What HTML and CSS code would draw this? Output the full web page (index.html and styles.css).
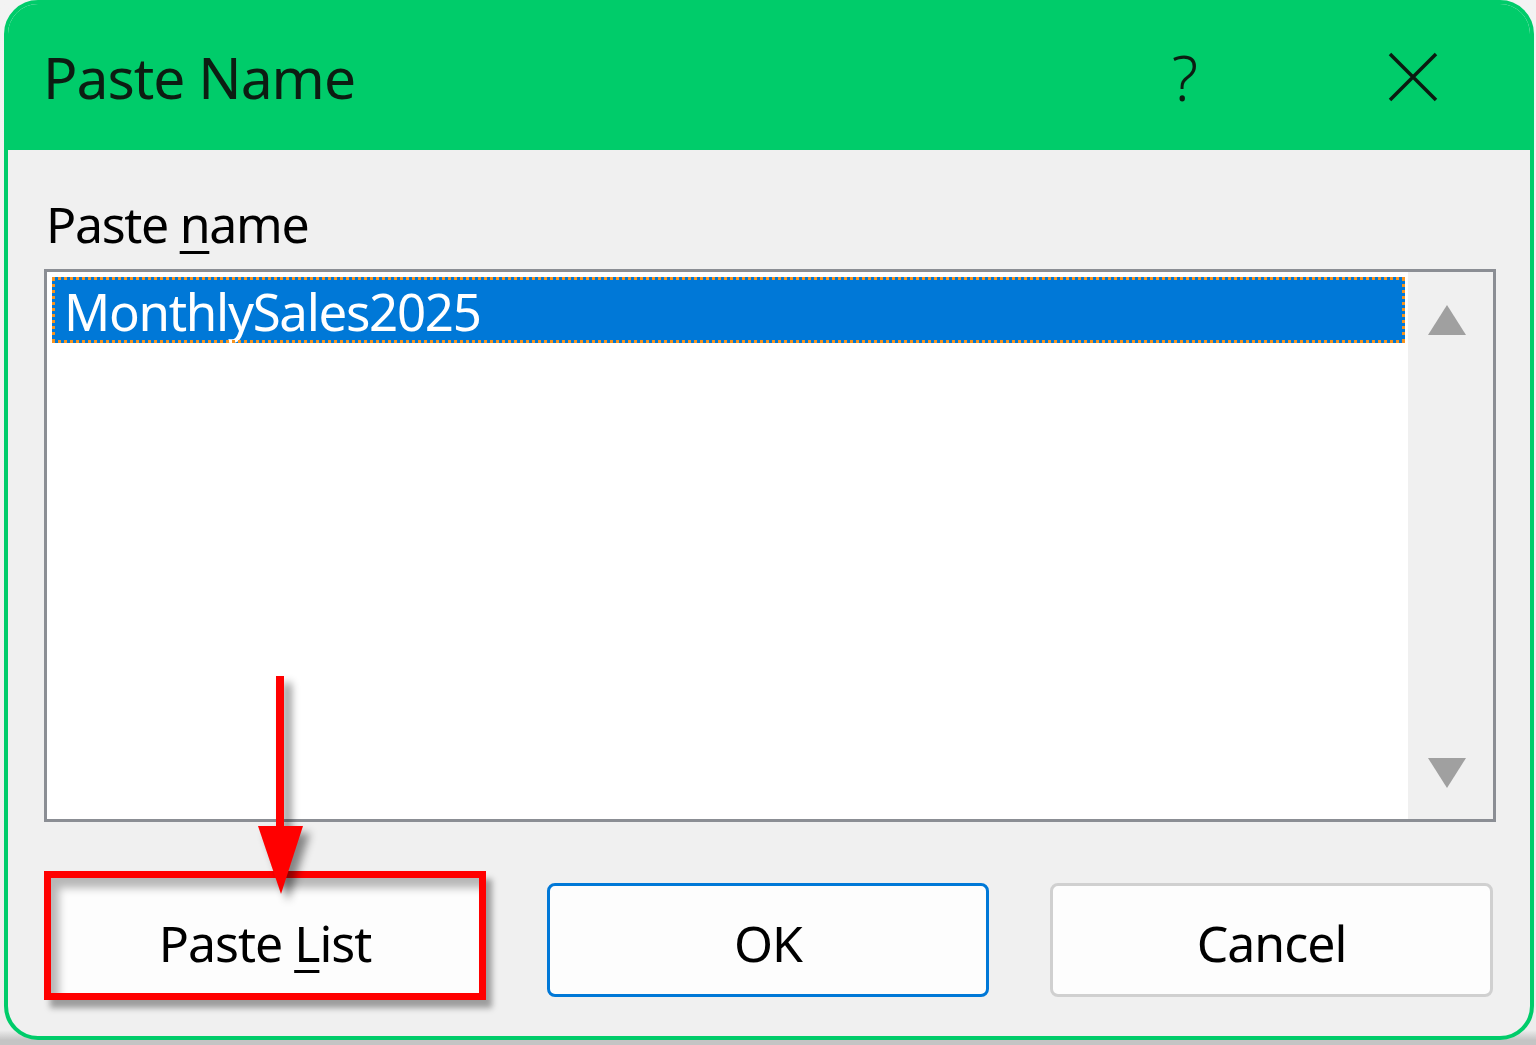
FILE: index.html
```html
<!DOCTYPE html>
<html lang="en">
<head>
<meta charset="utf-8">
<title>Paste Name</title>
<link rel="stylesheet" href="styles.css">
</head>
<body>
<div class="dialog">
  <header class="titlebar">
    <h1 class="title">Paste Name</h1>
    <div class="title-actions">
      <span class="help">?</span>
      <svg class="close" width="50" height="50" viewBox="0 0 50 50" aria-label="Close">
        <path d="M2 2 L48 48 M48 2 L2 48" stroke="#0b1a10" stroke-width="3.5" fill="none"/>
      </svg>
    </div>
  </header>
  <main class="content">
    <label class="field-label">Paste <u>n</u>ame</label>
    <div class="listbox">
      <ul class="items">
        <li class="item selected">MonthlySales2025</li>
      </ul>
      <div class="scrollbar">
        <svg class="scroll-arrow" width="38" height="30" viewBox="0 0 38 30"><polygon points="19,0 38,30 0,30" fill="#a0a0a0"/></svg>
        <svg class="scroll-arrow" width="38" height="30" viewBox="0 0 38 30"><polygon points="0,0 38,0 19,30" fill="#a0a0a0"/></svg>
      </div>
    </div>
    <div class="buttons">
      <div class="highlight">
        <button class="btn btn-inner">Paste <u>L</u>ist</button>
      </div>
      <button class="btn btn-default">OK</button>
      <button class="btn">Cancel</button>
    </div>
  </main>
  <svg class="annotation-arrow" width="80" height="250" viewBox="0 0 80 250">
    <rect x="26" y="16" width="8" height="156" fill="#ff0000"/>
    <polygon points="8,166 53,166 31,234" fill="#ff0000"/>
  </svg>
</div>
</body>
</html>
```

FILE: styles.css
```css
html, body {
  margin: 0;
  padding: 0;
}

body {
  width: 1536px;
  height: 1045px;
  background: linear-gradient(to bottom, #f3f3f3 0, #ededed 1030px, #c4c4c4 1040px, #c4c4c4 100%);
  font-family: "Noto Sans", "Open Sans", sans-serif;
  overflow: hidden;
}

.dialog {
  position: relative;
  box-sizing: border-box;
  width: 1530px;
  height: 1040px;
  margin-left: 4px;
  border: 4px solid #00cc6a;
  border-radius: 34px;
  background: #f0f0f0;
  overflow: hidden;
  display: flex;
  flex-direction: column;
}

.titlebar {
  box-sizing: border-box;
  height: 146px;
  flex: none;
  background: #00cc6a;
  display: flex;
  align-items: flex-start;
  justify-content: space-between;
  padding: 33px 0 0 35px;
}

.title {
  margin: 0;
  font-size: 57px;
  line-height: 80px;
  font-weight: 400;
  color: #0c1d12;
  letter-spacing: -1px;
}

.title-actions {
  display: flex;
  align-items: flex-start;
  gap: 190px;
  padding-right: 92px;
}

.help {
  font-size: 62px;
  line-height: 80px;
  color: #0c1d12;
  font-weight: 300;
}

.close {
  display: block;
  margin-top: 15px;
}

.content {
  flex: 1;
  display: flex;
  flex-direction: column;
  padding: 42px 34px 0 36px;
}

.field-label {
  display: block;
  font-size: 50px;
  line-height: 64px;
  color: #000;
  padding-left: 2px;
  letter-spacing: -1.3px;
}

.field-label u,
.btn u {
  text-decoration-thickness: 3px;
  text-underline-offset: 8px;
}

.listbox {
  box-sizing: border-box;
  margin-top: 13px;
  height: 553px;
  border: 3px solid #8b8e94;
  display: flex;
  background: #ffffff;
}

.items {
  flex: 1;
  list-style: none;
  margin: 0;
  padding: 5px 3px 0 5px;
}

.item {
  box-sizing: border-box;
  height: 66px;
  font-size: 51px;
  line-height: 63px;
  padding: 3px 0 0 12px;
  color: #ffffff;
  letter-spacing: -1.3px;
}

.item.selected {
  background: #0078d7;
  outline: 3px dotted #f7931e;
  outline-offset: -3px;
}

.scrollbar {
  width: 85px;
  flex: none;
  background: #f0f0f0;
  display: flex;
  flex-direction: column;
  justify-content: space-between;
  align-items: center;
  padding: 33px 0 31px;
  box-sizing: border-box;
}

.scroll-arrow {
  display: block;
  margin-left: -7px;
}

.buttons {
  margin-top: 49px;
  display: grid;
  grid-template-columns: 442px 442px 443px;
  column-gap: 61px;
  align-items: start;
}

.btn {
  box-sizing: border-box;
  height: 114px;
  margin-top: 12px;
  border: 3px solid #d0d0d0;
  border-radius: 8px;
  background: #fdfdfd;
  font-family: "Noto Sans", "Open Sans", sans-serif;
  font-size: 50px;
  color: #000;
  padding: 5px 0 0;
  letter-spacing: -1px;
}

.btn-default {
  border-color: #0078d7;
}

.highlight {
  box-sizing: border-box;
  height: 129px;
  border: 7px solid #ff0000;
  box-shadow: 6px 8px 6px rgba(0, 0, 0, 0.35);
  display: flex;
}

.btn-inner {
  flex: 1;
  height: auto;
  margin: 0;
  border: none;
  border-radius: 0;
  box-shadow: inset 8px 10px 8px rgba(0, 0, 0, 0.28);
  padding-top: 14px;
}

.annotation-arrow {
  position: absolute;
  left: 242px;
  top: 656px;
  filter: drop-shadow(7px 7px 4px rgba(0, 0, 0, 0.45));
}
```
